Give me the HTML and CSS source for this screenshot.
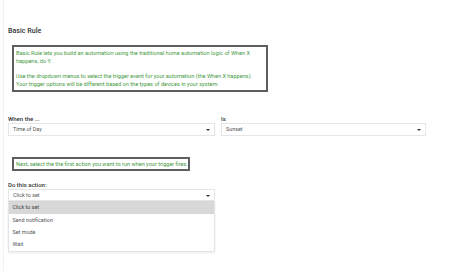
FILE: index.html
```html
<!DOCTYPE html>
<html>
<head>
<meta charset="UTF-8">
<link rel="stylesheet" href="styles.css">
<title>Basic Rule</title>
</head>
<body>
	<div class="frame">
		<div class="title">Basic Rule</div>
		<div class="note intro">
			<p>Basic Rule lets you build an automation using the traditional home automation logic of When X<br>happens, do Y.</p>
			<p>Use the dropdown menus to select the trigger event for your automation (the When X happens).<br>Your trigger options will be different based on the types of devices in your system.</p>
		</div>
		<div class="trigger">
			<div class="field">
				<div class="label">When the ...</div>
				<div class="select wide">Time of Day<span class="caret"></span></div>
			</div>
			<div class="field">
				<div class="label">Is</div>
				<div class="select">Sunset<span class="caret"></span></div>
			</div>
		</div>
		<div class="note next">
			<p>Next, select the the first action you want to run when your trigger fires.</p>
		</div>
		<div class="action">
			<div class="label">Do this action:</div>
			<div class="select open">Click to set<span class="caret"></span></div>
			<ul class="menu">
				<li class="active">Click to set</li>
				<li>Send notification</li>
				<li>Set mode</li>
				<li>Wait</li>
			</ul>
		</div>
	</div>
</body>
</html>
```

FILE: styles.css
```css
body{
	margin: 0;
	background: #ffffff;
	font-family: Roboto, "Liberation Sans", Arial, sans-serif;
	color: #333;
}

.frame{
	margin-left: 3px;
	padding: 27px 0 20px 4px;
	border-left: 1px solid #f1f1f1;
	min-height: 224px;
}

.title{
	font-size: 7.1px;
	line-height: 8px;
	font-weight: 500;
	color: #333;
	margin-bottom: 10px;
}

.note{
	margin-left: 4px;
	border: 2px solid #5f5f5f;
	color: #3f9a3f;
	font-size: 5.6px;
	line-height: 8.3px;
	white-space: nowrap;
	box-sizing: border-box;
}

.note p{
	margin: 0;
}

.intro{
	width: 256px;
	height: 47px;
	padding: 1.5px 2px;
}

.intro p + p{
	margin-top: 6.7px;
}

.next{
	width: 178px;
	height: 14.3px;
	margin-top: 20.5px;
	padding: 1px 2px;
	font-size: 5.55px;
	line-height: 8.3px;
}

.trigger{
	display: grid;
	grid-template-columns: 207px 205px;
	column-gap: 6px;
	margin-top: 23px;
}

.label{
	font-size: 6px;
	line-height: 7px;
	font-weight: 500;
	color: #333;
	margin-bottom: 1px;
}

.select{
	position: relative;
	height: 13.3px;
	box-sizing: border-box;
	border: 1px solid #e6e6e6;
	box-shadow: 0 0 1px rgba(0,0,0,0.06);
	padding-left: 4px;
	font-size: 5.4px;
	line-height: 11.3px;
	color: #555;
}

.caret{
	position: absolute;
	right: 4px;
	top: 5px;
	border-left: 2px solid transparent;
	border-right: 2px solid transparent;
	border-top: 2.5px solid #333;
}

.action{
	margin-top: 10px;
	width: 207px;
}

.action .select{
	height: 12.4px;
	line-height: 10.4px;
}

.action .caret{
	top: 4.5px;
}

.menu{
	list-style: none;
	margin: 0;
	padding: 0;
	border: 1px solid #e4e4e4;
	border-top: none;
	box-shadow: 0 1px 2px rgba(0,0,0,0.08);
	font-size: 5.4px;
	color: #555;
}

.menu li{
	height: 12.3px;
	line-height: 12.3px;
	padding-left: 3.5px;
}

.menu li.active{
	background: #d8d8d8;
	color: #444;
}
```
